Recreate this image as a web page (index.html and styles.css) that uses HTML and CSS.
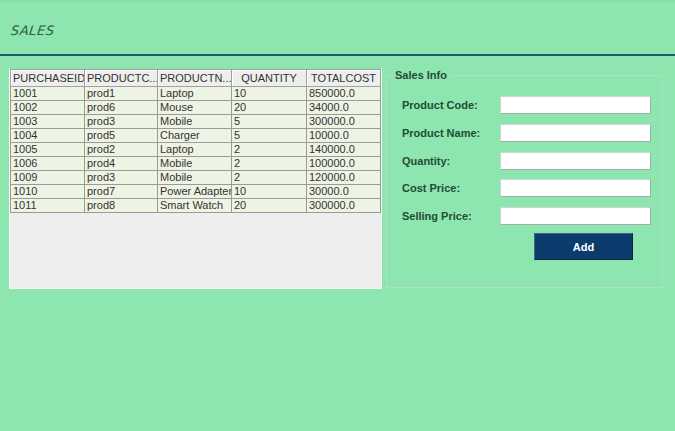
FILE: index.html
```html
<!DOCTYPE html>
<html>
<head>
<meta charset="utf-8">
<link rel="stylesheet" href="styles.css">
</head>
<body>
<div class="topbar">
  <div class="title">SALES</div>
</div>
<div class="rule"></div>
<div class="main">
  <div class="tablepane">
    <table class="grid">
      <colgroup><col class="c1"><col class="c2"><col class="c3"><col class="c4"><col class="c5"></colgroup>
      <thead>
        <tr><th>PURCHASEID</th><th>PRODUCTC...</th><th>PRODUCTN...</th><th>QUANTITY</th><th>TOTALCOST</th></tr>
      </thead>
      <tbody>
        <tr><td>1001</td><td>prod1</td><td>Laptop</td><td>10</td><td>850000.0</td></tr>
        <tr><td>1002</td><td>prod6</td><td>Mouse</td><td>20</td><td>34000.0</td></tr>
        <tr><td>1003</td><td>prod3</td><td>Mobile</td><td>5</td><td>300000.0</td></tr>
        <tr><td>1004</td><td>prod5</td><td>Charger</td><td>5</td><td>10000.0</td></tr>
        <tr><td>1005</td><td>prod2</td><td>Laptop</td><td>2</td><td>140000.0</td></tr>
        <tr><td>1006</td><td>prod4</td><td>Mobile</td><td>2</td><td>100000.0</td></tr>
        <tr><td>1009</td><td>prod3</td><td>Mobile</td><td>2</td><td>120000.0</td></tr>
        <tr><td>1010</td><td>prod7</td><td>Power Adapter</td><td>10</td><td>30000.0</td></tr>
        <tr><td>1011</td><td>prod8</td><td>Smart Watch</td><td>20</td><td>300000.0</td></tr>
      </tbody>
    </table>
  </div>
  <fieldset class="info">
    <legend>Sales Info</legend>
    <div class="form">
      <label>Product Code:</label><div class="field"></div>
      <label>Product Name:</label><div class="field"></div>
      <label>Quantity:</label><div class="field"></div>
      <label>Cost Price:</label><div class="field"></div>
      <label>Selling Price:</label><div class="field"></div>
    </div>
    <div class="actions"><button class="add">Add</button></div>
  </fieldset>
</div>
</body>
</html>
```

FILE: styles.css
```css
html, body {
  margin: 0;
  padding: 0;
  background: #8de5b0;
  width: 675px;
  height: 431px;
  overflow: hidden;
  font-family: "Liberation Sans", Arial, sans-serif;
}
.topbar {
  height: 54px;
  border-top: 2px solid #84e0aa;
  box-sizing: border-box;
  display: flex;
  align-items: center;
  padding-left: 11px;
}
.title {
  font-family: "DejaVu Sans", sans-serif;
  font-style: italic;
  font-size: 13px;
  letter-spacing: 0.6px;
  color: #2f5f45;
  transform: skewX(-6deg);
  margin-top: 4px;
}
.rule {
  height: 2px;
  background: #1f5a6c;
}
.main {
  display: flex;
  align-items: flex-start;
  padding: 12px 0 0 9px;
}
.tablepane {
  width: 371px;
  height: 219px;
  background: #eeeeee;
  border: 1px solid #f6f8f6;
  border-top: 1px solid #8de5b0;
}
.grid {
  border-collapse: collapse;
  table-layout: fixed;
  width: 370px;
  font-size: 11px;
  color: #333;
}
.c1 { width: 74px; }
.c2 { width: 73px; }
.c3 { width: 74px; }
.c4 { width: 75px; }
.c5 { width: 74px; }
.grid th {
  height: 16px;
  padding: 0 2px;
  background: #eeeeee;
  border: 1px solid #a0a0a0;
  box-shadow: inset 1px 1px 0 #ffffff;
  font-weight: normal;
  color: #333;
  text-align: center;
  white-space: nowrap;
  overflow: hidden;
}
.grid td {
  height: 13px;
  padding: 0 2px;
  line-height: 13px;
  background: #eef4e3;
  border: 1px solid #9a9a9a;
  white-space: nowrap;
  overflow: hidden;
  color: #333;
}
.info {
  margin: 1px 0 0 4px;
  padding: 6px 10px 22px 15px;
  width: 250px;
  height: 189px;
  border: 1px solid #aee0c6;
  box-sizing: content-box;
}
.info legend {
  font-size: 11px;
  font-weight: bold;
  color: #2a4a38;
  padding: 0 2px;
  margin-left: -9px;
}
.form {
  display: grid;
  grid-template-columns: 98px 151px;
  grid-auto-rows: 18px;
  row-gap: 9.75px;
  align-items: center;
  margin-top: 9px;
}
.form label {
  font-size: 11px;
  font-weight: bold;
  color: #224d33;
}
.field {
  height: 18px;
  box-sizing: border-box;
  background: #ffffff;
  border: 1px solid #c9d9cf;
  border-right-color: #9fb0a6;
  border-bottom-color: #9fb0a6;
}
.actions {
  display: flex;
  padding-left: 132px;
  margin-top: 8px;
}
.add {
  width: 99px;
  height: 27px;
  background: #0d3b6e;
  border: 1px solid #3d6894;
  border-right-color: #082446;
  border-bottom-color: #082446;
  color: #ffffff;
  font-family: "Liberation Sans", Arial, sans-serif;
  font-size: 11px;
  font-weight: bold;
  padding: 0;
}
```
